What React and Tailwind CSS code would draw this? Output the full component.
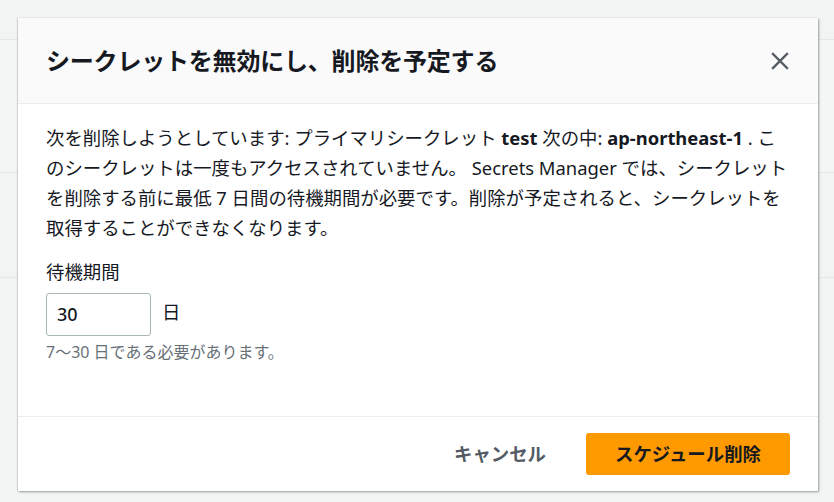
import React from "react";

export default function App() {
  const font = { fontFamily: '"Noto Sans", "Noto Sans CJK JP", sans-serif' };
  return (
    <div className="relative w-[834px] h-[502px] overflow-hidden bg-[#f2f3f3]" style={font}>
      <div className="flex flex-col">
        <div className="h-[39px] bg-[#f2f3f3]" />
        <div className="h-[133px] border-t border-[#e6e8e8] bg-[#f4f5f5]" />
        <div className="h-[105px] border-t border-[#e6e8e8] bg-[#f2f3f3]" />
        <div className="border-t border-[#e6e8e8]" />
      </div>

      <div className="absolute left-[18px] top-[18px] w-[800px] h-[473px] bg-white flex flex-col shadow-[1px_1px_2px_rgba(0,28,36,0.4),-1px_0_1px_rgba(0,28,36,0.12)]">
        <div className="h-[86px] shrink-0 bg-[#fafafa] border-b border-[#eaeded] flex items-center justify-between pl-[28px] pr-[28px]">
          <h1 className="text-[24px] font-bold text-[#16191f] leading-none tracking-[-0.2px]">
            シークレットを無効にし、削除を予定する
          </h1>
          <svg width="18" height="18" viewBox="0 0 18 18" className="mr-[1px]">
            <path d="M2 2 L16 16 M16 2 L2 16" stroke="#545b64" strokeWidth="2.4" strokeLinecap="square" fill="none" />
          </svg>
        </div>

        <div className="flex-1 pl-[28px] pr-[20px] pt-[19px]">
          <p className="text-[18.4px] leading-[30px] text-[#16191f] whitespace-nowrap">
            次を削除しようとしています: プライマリシークレット <b className="font-bold">test</b> 次の中: <b className="font-bold">ap-northeast-1</b> . こ
            <br />
            のシークレットは一度もアクセスされていません。 Secrets Manager では、シークレット
            <br />
            を削除する前に最低 7 日間の待機期間が必要です。削除が予定されると、シークレットを
            <br />
            取得することができなくなります。
          </p>
          <div className="mt-[16px] text-[18.4px] leading-[26px] text-[#16191f]">待機期間</div>
          <div className="mt-[8px] flex items-start gap-[11px]">
            <div className="w-[105px] h-[43px] border border-[#aab7b8] rounded-[3px] flex items-center pl-[10px] text-[18px] font-medium text-[#16191f]">
              30
            </div>
            <span className="text-[18.4px] leading-[38px] text-[#16191f]">日</span>
          </div>
          <div className="mt-[5px] text-[16px] leading-[22px] text-[#687078]">7〜30 日である必要があります。</div>
        </div>

        <div className="h-[75px] shrink-0 border-t border-[#eaeded] flex items-center justify-end pr-[28px] gap-[40px]">
          <span className="text-[18.4px] font-bold text-[#545b64]">キャンセル</span>
          <button className="w-[204px] h-[42px] bg-[#ff9900] rounded-[3px] text-[18.4px] font-bold text-[#16191f]">
            スケジュール削除
          </button>
        </div>
      </div>
    </div>
  );
}
